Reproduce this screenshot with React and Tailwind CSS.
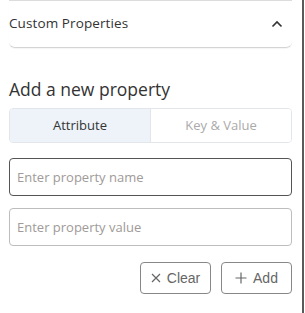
export default function App() {
    return (
        <div className="flex h-[313px] w-[305px] bg-white" style={{ fontFamily: '"Open Sans", sans-serif' }}>
            <div className="flex-1 pl-[9px] pr-[10px]">
                <div className="h-[1px] bg-[#dcdcdc]" />
                <div className="mt-[2px] flex h-[45px] items-center justify-between rounded-b-md border-b border-[#d4d4d4] pb-[3px] pr-[8px] shadow-[0_1px_1px_rgba(0,0,0,0.04)]">
                    <span className="text-[13.5px] tracking-[0.1px] text-[#333]">Custom Properties</span>
                    <svg width="14" height="14" viewBox="0 0 14 14" fill="none" stroke="#333" strokeWidth="1.6">
                        <path d="M2.5 9.5 L7 5 L11.5 9.5" />
                    </svg>
                </div>

                <h2 className="mt-[30px] text-[17.5px] leading-[22px] tracking-[0px] text-[#333]">Add a new property</h2>

                <div className="mt-[8px] flex h-[35px] overflow-hidden rounded border border-[#e2e5ea] text-[13px]">
                    <button className="flex-1 bg-[#eef3fa] text-[#333]">Attribute</button>
                    <button className="flex-1 border-l border-[#e2e5ea] bg-white text-[#aaa]">Key &amp; Value</button>
                </div>

                <input
                    className="mt-[15px] block h-[38px] w-full rounded border border-[#555] px-[7px] text-[13px] text-[#333] outline-none placeholder:text-[#a09a98]"
                    placeholder="Enter property name"
                />
                <input
                    className="mt-[12px] block h-[38px] w-full rounded border border-[#bdbdbd] px-[7px] text-[13px] text-[#333] outline-none placeholder:text-[#a09a98]"
                    placeholder="Enter property value"
                />

                <div className="mt-[16px] flex justify-end gap-[10px]" style={{ fontFamily: '"Liberation Sans", sans-serif' }}>
                    <button className="flex h-[32px] w-[71px] items-center justify-center gap-[6px] rounded border border-[#888] text-[14px] text-[#666]">
                        <svg width="10" height="10" viewBox="0 0 10 10" stroke="#666" strokeWidth="1.2">
                            <path d="M1 1 L9 9 M9 1 L1 9" />
                        </svg>
                        Clear
                    </button>
                    <button className="flex h-[32px] w-[71px] items-center justify-center gap-[6px] rounded border border-[#888] text-[14px] text-[#666]">
                        <svg width="12" height="12" viewBox="0 0 12 12" stroke="#666" strokeWidth="1.2">
                            <path d="M6 0.5 V11.5 M0.5 6 H11.5" />
                        </svg>
                        Add
                    </button>
                </div>
            </div>
            <div className="mr-[1px] w-[2px] bg-[#5a5a5a]" />
        </div>
    );
}
